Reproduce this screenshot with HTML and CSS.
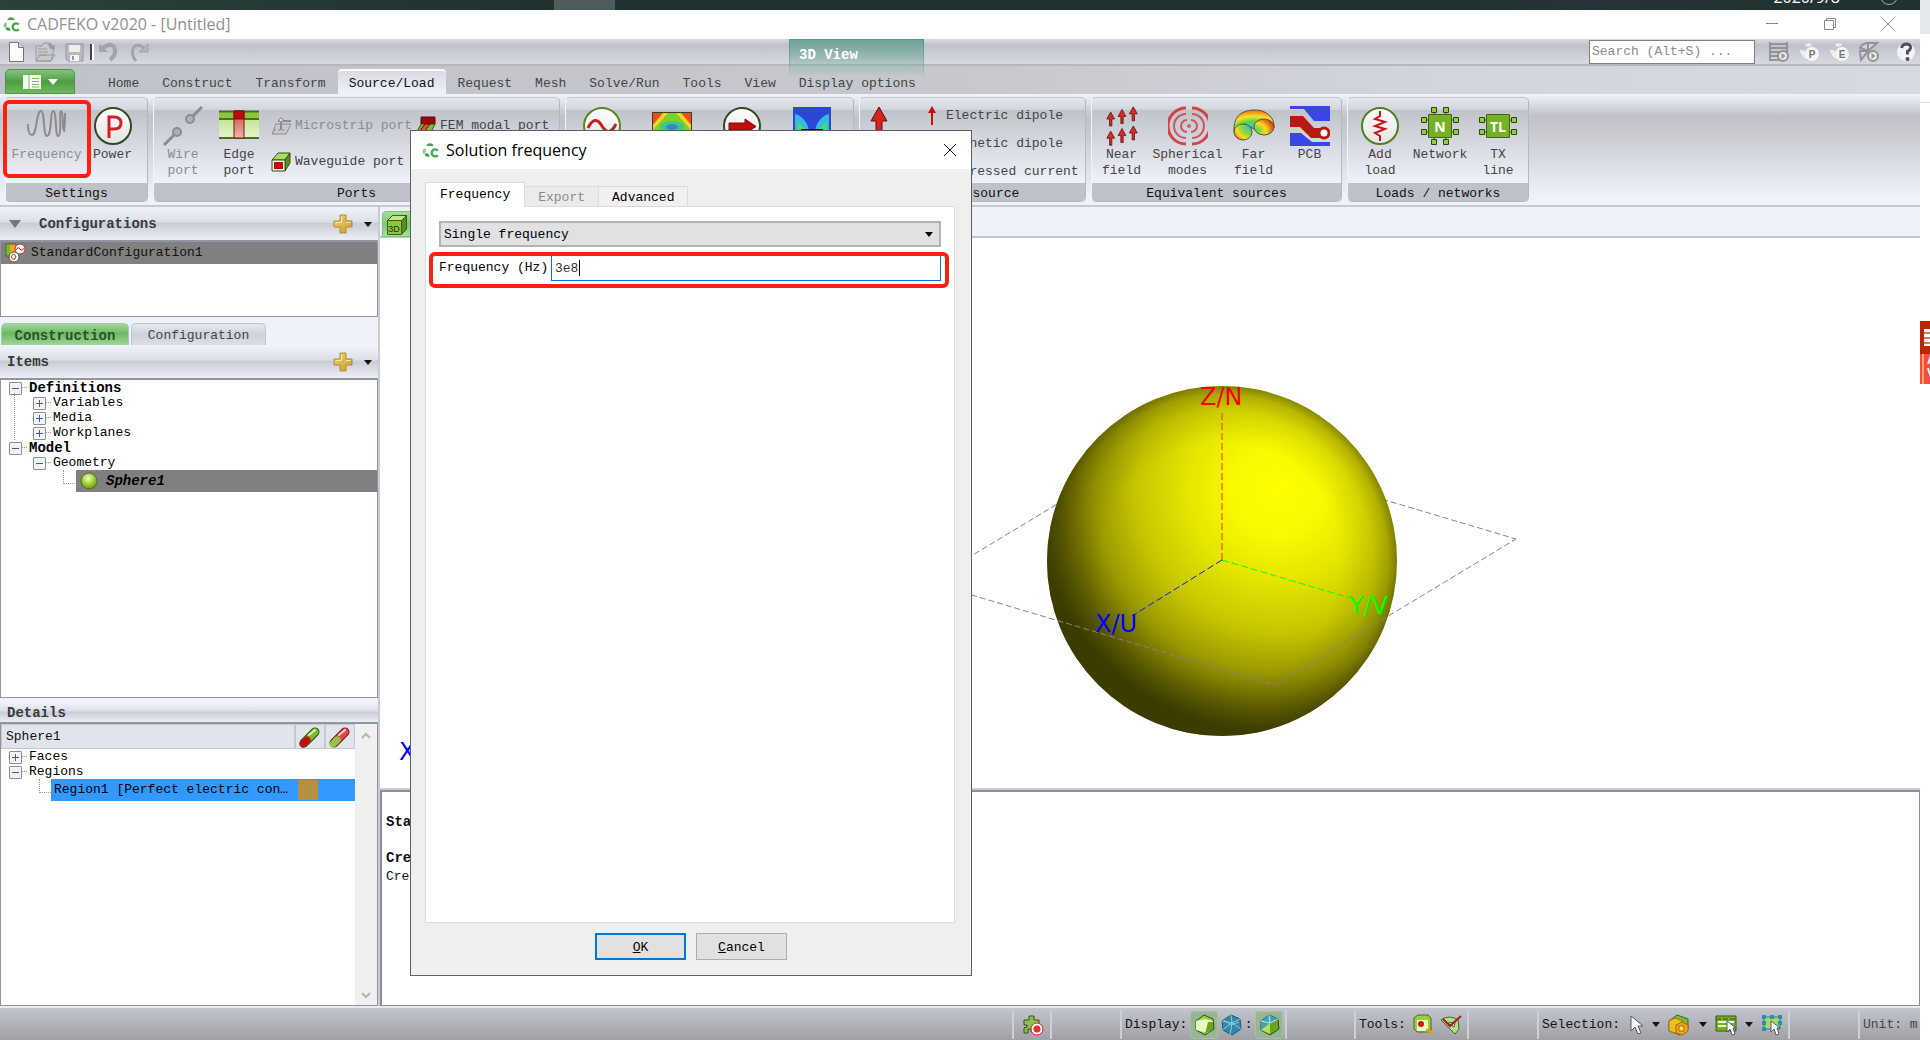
FILE: index.html
```html
<!DOCTYPE html>
<html lang="en">
<head>
<meta charset="utf-8">
<title>CADFEKO v2020 - [Untitled]</title>
<link rel="stylesheet" href="styles.css">
</head>
<body>
<svg class="defs" width="0" height="0" aria-hidden="true">
  <defs>
    <linearGradient id="gold" x1="0" y1="0" x2="1" y2="1"><stop offset="0" stop-color="#ecd577"/><stop offset="1" stop-color="#c9992c"/></linearGradient>
    <radialGradient id="ball" cx=".45" cy=".35" r=".65"><stop offset="0" stop-color="#f2fbd8"/><stop offset=".5" stop-color="#a4d63c"/><stop offset="1" stop-color="#5f9a10"/></radialGradient>
    <linearGradient id="edgeFade" x1="0" y1="0" x2="0" y2="1"><stop offset="0" stop-color="#b5dd7c"/><stop offset="1" stop-color="#e6f5cf"/></linearGradient>
    <linearGradient id="redFade" x1="0" y1="0" x2="0" y2="1"><stop offset="0" stop-color="#d24a43"/><stop offset="1" stop-color="#eeb5a8"/></linearGradient>
    <linearGradient id="disc" x1="0" y1="0" x2="0" y2="1"><stop offset="0" stop-color="#ffffff"/><stop offset="1" stop-color="#e2e2e2"/></linearGradient>
    <radialGradient id="rainbow" cx=".5" cy=".95" r=".95"><stop offset=".2" stop-color="#35c8d8"/><stop offset=".45" stop-color="#5bd13e"/><stop offset=".7" stop-color="#f5e428"/><stop offset="1" stop-color="#ee6a12"/></radialGradient>
    <radialGradient id="lobeL" cx=".9" cy=".15" r="1"><stop offset="0" stop-color="#33bfd2"/><stop offset=".5" stop-color="#8fd833"/><stop offset=".8" stop-color="#f6e01f"/><stop offset="1" stop-color="#ef7a14"/></radialGradient>
    <radialGradient id="lobeR" cx=".1" cy=".75" r="1"><stop offset="0" stop-color="#45cf5f"/><stop offset=".5" stop-color="#f4dc20"/><stop offset="1" stop-color="#dd2413"/></radialGradient>
    <symbol id="logo" viewBox="0 0 18 18">
      <path d="M5 4.500Q9 0 13 4.500L10.500 5.200Q9 4.300 7.500 5.200Z" fill="#43a04d"/>
      <path d="M3 7.500Q0 11 3 13L5 11Q4 9.500 5 8Z" fill="#8cc98f"/>
      <path d="M3.500 13.500Q5 16.500 8.500 15.500L7.500 12.800Q6 13 5.500 12Z" fill="#3f9d49"/>
      <path d="M16.800 9.600A3.500 3.500 0 1 0 16.800 14.200" fill="none" stroke="#46a84f" stroke-width="2.400"/>
    </symbol>
    <symbol id="plus" viewBox="0 0 20 20"><path d="M7 1h6v6h6v6h-6v6H7v-6H1V7h6z" fill="url(#gold)" stroke="#b48b2c"/><path d="M8.500 2.500v6H2.500M13 8.500h4.500" fill="none" stroke="#f7e9a8"/></symbol>
    <symbol id="tri" viewBox="0 0 8 5"><path d="M0 0h8L4 5z" fill="currentColor"/></symbol>
    <symbol id="field-arrow" viewBox="0 0 12 20"><path d="M6 1l5 9H7.500v9h-3v-9H1z" fill="#d92b24" stroke="#5c1110"/></symbol>
  </defs>
</svg>

<div class="desktop">
<main class="app">
  <div class="taskstrip"><span class="strip-thumb"></span><span class="strip-date">2020/9/8</span><span class="strip-dot"></span></div>

  <header class="titlebar">
    <svg class="logo" width="18" height="18"><use href="#logo"/></svg>
    <h1>CADFEKO v2020 - [Untitled]</h1>
    <div class="winbtns">
      <button aria-label="Minimize"><svg width="14" height="14"><path d="M1 6.500h12" stroke="#888" fill="none"/></svg></button>
      <button aria-label="Restore"><svg width="14" height="14"><path d="M1.500 3.500h9v9h-9zM3.500 3.500v-2h9v9h-2" stroke="#888" fill="none"/></svg></button>
      <button aria-label="Close"><svg width="14" height="14"><path d="M1 1l12 12M13 1L1 13" stroke="#888" fill="none"/></svg></button>
    </div>
  </header>

  <div class="quickbar">
    <button aria-label="New"><svg width="20" height="22"><path d="M3.500 1.500h9l5 5v14h-14z" fill="#fcfcfc" stroke="#777"/><path d="M12.500 1.500v5h5" fill="#ddd" stroke="#777"/></svg></button>
    <button aria-label="Open"><svg width="22" height="22"><path d="M2 20V5h6l2-3h6v5h4l-3 13z" fill="#c9cacd" stroke="#9a9a9a"/><path d="M4 8h9M4 11h10M4 14h8M2 20l4-6h15l-4 6z" stroke="#9a9a9a" fill="none"/><path d="M13 4q4-3 6 1l2-1-1 5-5-2 2-1q-2-2-4-2z" fill="#999"/></svg></button>
    <button aria-label="Save"><svg width="22" height="22"><path d="M2 3h17v17H4l-2-2z" fill="#b9babd" stroke="#999"/><path d="M5 4h11v7H5z" fill="#eee"/><path d="M6 14h9v6H6z" fill="#f5f5f5"/><path d="M8 15h2v4H8z" fill="#999"/></svg></button>
    <span class="qdiv"></span>
    <button aria-label="Undo"><svg width="22" height="22"><path d="M5 7Q14 0 17 8Q18 14 12 19" fill="none" stroke="#a3a4a8" stroke-width="4"/><path d="M1 3v8h9z" fill="#a3a4a8"/></svg></button>
    <button aria-label="Redo"><svg width="22" height="22"><path d="M16 7Q8 1 5 8Q3 14 8 20" fill="none" stroke="#a3a4a8" stroke-width="3"/><path d="M20 3v8h-9z" fill="#b4b5b9" stroke="#a3a4a8"/></svg></button>
    <div class="context-head">3D View</div>
    <div class="quick-right">
      <input class="search" type="text" aria-label="Search" placeholder="Search (Alt+S) ...">
      <button aria-label="CADFEKO"><svg width="22" height="22"><path d="M2 1v19M19 1v10M1 3h18M1 7h18M1 11h12M1 15h10M1 19h11" stroke="#929396" stroke-width="2" fill="none"/><circle cx="15" cy="15" r="5" fill="#e8e8e8" stroke="#929396" stroke-width="2"/><path d="M13.500 12l4 3-4 3z" fill="#929396"/></svg></button>
      <button aria-label="POSTFEKO"><svg width="22" height="22"><path d="M6 4q5-5 9 0l-3 2H9zM1 8l6 1 3 10q-7-1-9-11z" fill="#eee" stroke="#c4c4c6"/><circle cx="14" cy="13" r="7" fill="#f6f6f6"/><text x="14" y="17" class="glyph">P</text></svg></button>
      <button aria-label="EDITFEKO"><svg width="22" height="22"><path d="M6 4q5-5 9 0l-3 2H9zM1 8l6 1 3 10q-7-1-9-11z" fill="#eee" stroke="#c4c4c6"/><circle cx="14" cy="13" r="7" fill="#f6f6f6"/><text x="14" y="17" class="glyph">E</text></svg></button>
      <button aria-label="Run solver"><svg width="22" height="22"><path d="M2 7q3-5 8-5v8zM10 10l9-8H10zM10 10H2l1 9zM3 7l7 3" fill="#d6d6d8" stroke="#929396" stroke-width="2"/><circle cx="15" cy="15" r="5" fill="#e8e8e8" stroke="#929396" stroke-width="2"/><path d="M13.500 12l4 3-4 3z" fill="#929396"/></svg></button>
      <button class="help" aria-label="Help"><svg width="22" height="22"><circle cx="11" cy="11" r="9" fill="#f2f3f5"/><path d="M6.500 7Q7.500 3 11.500 3Q16 3.500 15.500 7Q15 9.500 12.500 10.500V13.500" fill="none" stroke="#4c4f5a" stroke-width="3"/><circle cx="12.500" cy="18" r="2" fill="#4c4f5a"/></svg></button>
    </div>
  </div>

  <nav class="tabs">
    <button class="appmenu" aria-label="Application menu"><svg width="18" height="14"><path d="M0 0h18v14H0z" fill="#f3fbef"/><path d="M6 0v14M9 3.500h7M9 6.500h7M9 9.500h7M9 12h7" stroke="#7dbb68" fill="none"/></svg><svg width="10" height="6"><path d="M0 0h10L5 6z" fill="#fff"/></svg></button>
    <a href="#">Home</a><a href="#">Construct</a><a href="#">Transform</a><a href="#" class="on">Source/Load</a><a href="#">Request</a><a href="#">Mesh</a><a href="#">Solve/Run</a><a href="#">Tools</a><a href="#">View</a><a href="#">Display options</a>
  </nav>

  <section class="ribbon">
    <div class="group settings">
      <div class="tools">
        <button class="big off w72"><svg width="40" height="40"><path d="M1 18q0 11 4 11c5 0 4-24 9-24c4 0 2 25 6 25c5 0 3-25 6-25c4 0 2 25 5 25c4 0 1-25 3-25c3 0 1 20 3 20q1-6 1-18" fill="none" stroke="#8b8c90" stroke-width="2"/></svg>Frequency</button>
        <button class="big w60"><svg width="40" height="40"><circle cx="20" cy="20" r="18" fill="url(#disc)" stroke="#2f4a22" stroke-width="2"/><path d="M16 32V11h5q7 0 7 6t-7 6h-5" fill="none" stroke="#cf2127" stroke-width="3"/></svg>Power</button>
        <span class="mark mark-ribbon"></span>
      </div>
      <h2>Settings</h2>
    </div>

    <div class="group ports">
      <div class="tools">
        <button class="big off w56"><svg width="40" height="40"><path d="M1 39L15 25M26 14L39 1" stroke="#8b8c90" stroke-width="3"/><circle cx="14" cy="26" r="4" fill="#b0b1b5" stroke="#8b8c90" stroke-width="2"/><circle cx="27" cy="13" r="4" fill="#b0b1b5" stroke="#8b8c90" stroke-width="2"/></svg>Wire<br>port</button>
        <button class="big w56"><svg width="42" height="40"><path d="M1 5h40v27H1z" fill="url(#edgeFade)"/><path d="M1 5h40v8H1z" fill="#8cc63a"/><path d="M1 5.500h40M1 13h40M1 32h40" stroke="#4a6d20" stroke-width="2"/><path d="M16 5h10v27H16z" fill="url(#redFade)" stroke="#7c120e"/><path d="M16 5h10v8H16z" fill="#bb0b09" stroke="#7c120e"/></svg>Edge<br>port</button>
        <div class="stack two">
          <button class="small off"><svg width="20" height="20"><path d="M5 8h15l-5 10H1z" fill="#c7c8cc" stroke="#8b8c90"/><path d="M7 5h14M10 2v12" stroke="#8b8c90" stroke-width="2"/><circle cx="10" cy="4" r="2" fill="#ddd" stroke="#8b8c90"/><path d="M3 14l12 0" stroke="#8b8c90" stroke-dasharray="2 2"/></svg>Microstrip port</button>
          <button class="small"><svg width="20" height="20"><path d="M1 8l6-7h12l-5 7z" fill="#a9dc60" stroke="#34520f"/><path d="M14 8l5-7v10l-5 8z" fill="#5f9317" stroke="#34520f"/><path d="M1 8h13v11H1z" fill="#f2f9e6" stroke="#34520f"/><path d="M3 10h9v7H3z" fill="#cc0605"/></svg>Waveguide port</button>
        </div>
        <div class="stack two">
          <button class="small"><svg width="20" height="20"><path d="M5 1h14v7H5z" fill="#a00806" stroke="#5e0705"/><path d="M5 8h14l-5 10H0z" fill="#84bd31" stroke="#34520f"/><path d="M3 16l6-8h5l-6 8z" fill="#d4564c" stroke="#5e0705"/></svg>FEM modal port</button>
        </div>
      </div>
      <h2>Ports</h2>
    </div>

    <div class="group sources">
      <div class="tools">
        <button class="big w70" aria-label="Voltage source"><svg width="40" height="40"><circle cx="20" cy="20" r="18" fill="url(#disc)" stroke="#58851d" stroke-width="2"/><path d="M6 22q7-14 14-2t14-2" fill="none" stroke="#c81e1e" stroke-width="3"/></svg></button>
        <button class="big w70" aria-label="Field source"><svg width="40" height="40"><path d="M0 6h40v34H0z" fill="#79cf33"/><path d="M0 6h12L0 20zM40 6H28l12 14z" fill="#ef4d1e"/><path d="M12 6L0 20v5L17 6zM28 6l12 14v5L23 6z" fill="#f3d524"/><ellipse cx="20" cy="21" rx="12" ry="6" fill="#3fc87c"/><ellipse cx="20" cy="21" rx="6" ry="3" fill="#3587cf"/><path d="M.5 40V6.500h39V40" fill="none" stroke="#3d3d25"/></svg></button>
        <button class="big w70" aria-label="Current source"><svg width="40" height="40"><circle cx="20" cy="20" r="18" fill="url(#disc)" stroke="#2f4a22" stroke-width="2"/><path d="M7 17h16v-4l11 7.500L23 28v-4H7z" fill="#c20d0a" stroke="#7b0c0a"/></svg></button>
        <button class="big w70" aria-label="Waveguide field"><svg width="40" height="40"><path d="M1 1h38v39H1z" fill="#2c46d8"/><path d="M3 8q14 3 16 28l-16-5zM37 8Q23 11 21 36l16-5z" fill="#38b7e6"/><path d="M5 16q10 4 12 22H5zM35 16Q25 20 23 38h12z" fill="#45d977"/><path d="M9 23h22v3H9z" fill="#f4ef2b"/><path d="M9 24h22" stroke="#111" stroke-width="2"/></svg></button>
      </div>
      <h2></h2>
    </div>

    <div class="group ideal">
      <div class="tools">
        <button class="big w36" aria-label="Plane wave"><svg width="36" height="40"><path d="M18 1l8 14h-5v25h-6V15h-5z" fill="#d7231d" stroke="#5c1110"/><path d="M32 24l4 3-4 4z" fill="#8a1815"/></svg></button>
        <div class="stack three">
          <button class="small"><svg width="20" height="20"><path d="M10 0l4 7h-3v12H9V7H6z" fill="#c4100e"/></svg>Electric dipole</button>
          <button class="small"><svg width="20" height="20"><path d="M10 0l4 7h-3v12H9V7H6z" fill="#3a9a2a"/></svg>Magnetic dipole</button>
          <button class="small"><svg width="20" height="20"><path d="M10 0l4 7h-3v12H9V7H6z" fill="#c4100e"/></svg>Impressed current</button>
        </div>
      </div>
      <h2>Ideal source</h2>
    </div>

    <div class="group equiv">
      <div class="tools">
        <button class="big w60"><svg width="40" height="46" viewBox="0 0 40 46"><use href="#field-arrow" x="1" y="6" width="12" height="18"/><use href="#field-arrow" x="14" y="3" width="12" height="18"/><use href="#field-arrow" x="27" y="0" width="12" height="18"/><use href="#field-arrow" x="1" y="28" width="12" height="18"/><use href="#field-arrow" x="14" y="25" width="12" height="18"/><use href="#field-arrow" x="27" y="22" width="12" height="18"/></svg>Near<br>field</button>
        <button class="big w72"><svg width="40" height="40"><g fill="none" stroke="#d02323" stroke-width="2"><path d="M18 2a18 18 0 0 0 0 36M24 38a18 18 0 0 0 0-36" stroke-width="3" opacity=".8"/><path d="M18 8a12 12 0 0 0 0 24M24 32a12 12 0 0 0 0-24" opacity=".7"/><path d="M19 14a6 6 0 0 0 0 12M23 26a6 6 0 0 0 0-12" opacity=".7"/></g><circle cx="21" cy="20" r="2" fill="#d86060"/></svg>Spherical<br>modes</button>
        <button class="big w60"><svg width="42" height="40"><path d="M1 26C0 9 10 4 22 4S42 12 41 22L31 14 21 23 12 18z" fill="url(#rainbow)" stroke="#575540"/><ellipse cx="10" cy="26" rx="9" ry="8" fill="url(#lobeL)" stroke="#575540"/><ellipse cx="31" cy="21" rx="10" ry="8" fill="url(#lobeR)" stroke="#575540"/></svg>Far<br>field</button>
        <button class="big w52"><svg width="40" height="40"><path d="M0 0h40v15H24L14 3H0zM0 27h11l11 9h18v4H0z" fill="#3846e6"/><path d="M0 10h13l11 12h12a6 6 0 0 1 0 10H21L10 21H0z" fill="#b51b12"/><circle cx="34" cy="27" r="5" fill="#fff" stroke="#b51b12" stroke-width="3"/></svg>PCB</button>
      </div>
      <h2>Equivalent sources</h2>
    </div>

    <div class="group loads">
      <div class="tools">
        <button class="big w60"><svg width="40" height="40"><circle cx="20" cy="20" r="18" fill="url(#disc)" stroke="#4f7d22" stroke-width="2"/><path d="M20 5v5l-5 3 10 3-10 4 10 3-10 4 5 3v5" fill="none" stroke="#c81412" stroke-width="2"/></svg>Add<br>load</button>
        <button class="big w60"><svg width="40" height="40"><path d="M4 14h32M4 26h32M14 4v32M26 4v32" stroke="#30451c"/><path d="M8.500 8.500h23v23h-23z" fill="#74b224" stroke="#3c6412"/><path d="M1.500 11.500h5v5h-5zM1.500 23.500h5v5h-5zM33.500 11.500h5v5h-5zM33.500 23.500h5v5h-5zM11.500 1.500h5v5h-5zM23.500 1.500h5v5h-5zM11.500 33.500h5v5h-5zM23.500 33.500h5v5h-5z" fill="#8fd03a" stroke="#2c4314"/><text x="20" y="26" class="chip">N</text></svg>Network</button>
        <button class="big w56"><svg width="40" height="40"><path d="M4 14h32M4 26h32" stroke="#30451c"/><path d="M8.500 8.500h23v23h-23z" fill="#74b224" stroke="#3c6412"/><path d="M1.500 11.500h5v5h-5zM1.500 23.500h5v5h-5zM33.500 11.500h5v5h-5zM33.500 23.500h5v5h-5z" fill="#8fd03a" stroke="#2c4314"/><text x="20" y="26" class="chip">TL</text></svg>TX<br>line</button>
      </div>
      <h2>Loads / networks</h2>
    </div>
  </section>

  <div class="workspace">
    <aside class="side">
      <div class="phead tall"><svg class="fold" width="12" height="8"><path d="M0 0h12L6 8z" fill="#777"/></svg><h3>Configurations</h3><button aria-label="Add configuration"><svg width="20" height="20"><use href="#plus"/></svg></button><button aria-label="Configuration options"><svg width="8" height="5"><use href="#tri"/></svg></button></div>
      <div class="box configs">
        <div class="config-row"><svg width="22" height="20"><path d="M1 1h10v12H1z" fill="#f6a21c" stroke="#3d6b1e"/><path d="M2 2h3v10H2z" fill="#5cc52f"/><circle cx="15" cy="6" r="5" fill="#fff" stroke="#a33"/><path d="M11 7q2-4 4-1t4-1" fill="none" stroke="#d11a1a"/><circle cx="9" cy="14" r="5" fill="#fff" stroke="#3d6b1e"/><path d="M6 14q3-6 5 0-2 5-5 0z" fill="none" stroke="#d11a1a"/></svg>StandardConfiguration1</div>
      </div>
      <div class="ptabs"><button class="on">Construction</button><button>Configuration</button></div>
      <div class="phead tall"><h3>Items</h3><button aria-label="Add item"><svg width="20" height="20"><use href="#plus"/></svg></button><button aria-label="Item options"><svg width="8" height="5"><use href="#tri"/></svg></button></div>
      <div class="box items">
        <ul class="tree">
          <li class="open"><span class="node strong">Definitions</span>
            <ul><li class="shut"><span class="node">Variables</span></li><li class="shut"><span class="node">Media</span></li><li class="shut"><span class="node">Workplanes</span></li></ul>
          </li>
          <li class="open"><span class="node strong">Model</span>
            <ul><li class="open"><span class="node">Geometry</span>
              <ul class="leafs"><li><span class="leaf sphere"><svg width="18" height="18"><circle cx="9" cy="9" r="8" fill="url(#ball)" stroke="#50741c"/></svg>Sphere1</span></li></ul>
            </li></ul>
          </li>
        </ul>
      </div>
      <div class="phead short"><h3>Details</h3></div>
      <div class="box details">
        <div class="detail-main">
          <div class="detail-head"><span>Sphere1</span>
            <button aria-label="Show faces"><svg width="22" height="22"><path d="M5 17L16 6" stroke="#2f4d12" stroke-width="9" stroke-linecap="round"/><path d="M6 16L16 6" stroke="#7dbb2c" stroke-width="7" stroke-linecap="round"/><path d="M10 9l6-5" stroke="#d8f0a8" stroke-width="2" stroke-linecap="round"/><path d="M4 18l4-4" stroke="#c00f12" stroke-width="7" stroke-linecap="round"/></svg></button>
            <button aria-label="Show regions"><svg width="22" height="22"><path d="M5 17L16 6" stroke="#7a1414" stroke-width="9" stroke-linecap="round"/><path d="M6 16L16 6" stroke="#e04a4a" stroke-width="7" stroke-linecap="round"/><path d="M10 9l6-5" stroke="#ffd0d0" stroke-width="2" stroke-linecap="round"/><path d="M4 18l4-4" stroke="#8cc84a" stroke-width="7" stroke-linecap="round"/></svg></button>
          </div>
          <ul class="tree">
            <li class="shut"><span class="node">Faces</span></li>
            <li class="open"><span class="node">Regions</span>
              <ul class="leafs"><li><span class="leaf region">Region1 [Perfect electric con…<i class="swatch"></i></span></li></ul>
            </li>
          </ul>
        </div>
        <div class="scroll"><svg width="10" height="7"><path d="M1 6l4-4 4 4" fill="none" stroke="#b5b5b5" stroke-width="2"/></svg><svg width="10" height="7"><path d="M1 1l4 4 4-4" fill="none" stroke="#b5b5b5" stroke-width="2"/></svg></div>
      </div>
    </aside>

    <section class="stage">
      <div class="viewtabs"><button aria-label="3D view"><svg width="22" height="22"><path d="M1.500 6.500l5-5h14v14l-5 5h-14z" fill="#8cc63f" stroke="#3e5f14"/><path d="M1.500 6.500l5-5h14l-5 5z" fill="#c4e58c" stroke="#3e5f14"/><path d="M15.500 6.500l5-5v14l-5 5z" fill="#5c8c1a" stroke="#3e5f14"/><text x="8" y="18" class="cube">3D</text></svg></button></div>
      <div class="viewport">
        <svg viewBox="380 238 1540 550" role="img" aria-label="Sphere model">
          <defs>
            <radialGradient id="lit" gradientUnits="userSpaceOnUse" cx="1278" cy="490" r="244"><stop offset="0" stop-color="#ffff00"/><stop offset=".2" stop-color="#f8f800"/><stop offset=".38" stop-color="#e4e400"/><stop offset=".58" stop-color="#c6c600"/><stop offset=".75" stop-color="#9a9a00"/><stop offset=".9" stop-color="#5e5e00"/><stop offset="1" stop-color="#3c3c00"/></radialGradient>
            <radialGradient id="rim" gradientUnits="userSpaceOnUse" cx="1222" cy="561" r="175"><stop offset=".68" stop-color="#3c3c00" stop-opacity="0"/><stop offset=".86" stop-color="#3c3c00" stop-opacity=".13"/><stop offset=".95" stop-color="#3c3c00" stop-opacity=".3"/><stop offset="1" stop-color="#3c3c00" stop-opacity=".55"/></radialGradient>
          </defs>
          <path d="M928 582L1170 436L1516 539" class="plane"/>
          <circle cx="1222" cy="561" r="175" fill="url(#lit)"/>
          <circle cx="1222" cy="561" r="175" fill="url(#rim)"/>
          <path d="M928 582L1274 685L1516 539" class="plane"/>
          <path d="M1222 560V413" class="axis z"/>
          <path d="M1222 560L1132 616" class="axis x"/>
          <path d="M1222 560L1350 598" class="axis y"/>
          <text x="1200" y="405" class="zt">Z/N</text>
          <text x="1095" y="632" class="xt">X/U</text>
          <text x="1349" y="614" class="yt">Y/V</text>
          <text x="399" y="760" class="xt">X</text>
        </svg>
      </div>
      <div class="messages"><p><b>Started</b></p><p class="gap"><b>Created</b></p><p>Created</p></div>
    </section>
  </div>

  <footer class="status">
    <div class="cell c38"><svg width="22" height="22"><path d="M2 6h5V2h5v4h5v5l3 1v6H9v-3H6v4H2v-5l3-1v-2H2z" fill="#8fc14a" stroke="#33501a"/><circle cx="15" cy="15" r="6" fill="#fff" stroke="#d22"/><circle cx="15" cy="15" r="3.500" fill="#e03030"/></svg></div>
    <div class="cell c70"></div>
    <div class="cell c165"><span>Display:</span>
      <button class="pressed" aria-label="Show geometry"><svg width="22" height="22"><path d="M3 7l8-6 9 4 1 10-9 6-9-5z" fill="#9ccf3e" stroke="#2f4d12"/><path d="M3 7l9-2 8 2-5 12-12-3z" fill="#e9f7c0"/><path d="M15 8l5 0 0 7-8 5z" fill="#6ca51d"/></svg></button>
      <button aria-label="Show mesh"><svg width="22" height="22"><path d="M2 7l9-6 9 4 1 10-9 6-9-5z" fill="#3189a8" stroke="#185a73"/><path d="M2 7l10 2 8-4M12 9l-2 12M12 9l9 6M2 16l10-7-1-8M4 6l7 5 8-3" stroke="#8fc9dc" fill="none"/></svg></button><span>:</span>
      <button class="pressed" aria-label="Show both"><svg width="22" height="22"><path d="M3 7l8-6 9 4 1 10-9 6-9-5z" fill="#6ca51d" stroke="#2f4d12"/><path d="M3 7l8-6 9 4-8 4-9 7z" fill="#3f9fbe"/><path d="M12 9l-9 7 9 4z" fill="#b4dd5e"/><path d="M3 7l9 2 8-4M11 1l1 8" stroke="#bfe6f2" fill="none"/></svg></button>
    </div>
    <div class="cell c69"></div>
    <div class="cell c113"><span>Tools:</span>
      <button aria-label="Measure"><svg width="22" height="22"><path d="M2 4l4-3h10l3 3v12l-3 2H5l-3-3z" fill="#9ccf3e" stroke="#46651f"/><path d="M5 6h11v11H5z" fill="#e9f7c0"/><circle cx="9" cy="10" r="3" fill="#c81a10"/><path d="M14 16l7 3" stroke="#d89c1e" stroke-width="3"/></svg></button>
      <button aria-label="Angle"><svg width="22" height="22"><path d="M1 6q8-6 17 0l1 9-4 5z" fill="#b9de86" stroke="#46651f"/><path d="M8 9l6 4 1-5z" fill="#eef8dd" stroke="#46651f"/><path d="M3 5l7 7L21 2" fill="none" stroke="#a32020" stroke-width="2"/></svg></button>
    </div>
    <div class="cell c70"></div>
    <div class="cell c251"><span>Selection:</span>
      <button aria-label="Pointer"><svg width="16" height="22"><path d="M3 2v15l4-4 3 7 3-1-3-7h5z" fill="#fff" stroke="#556"/></svg></button><svg class="tri" width="8" height="5"><use href="#tri"/></svg>
      <button aria-label="Select part"><svg width="22" height="22"><path d="M1 7l8-6 11 4v10l-8 6-11-4z" fill="#7dbb2c" stroke="#41631a"/><path d="M1 7l6-3 8 3-5 4v9l-9-3z" fill="#e8c21c" stroke="#a37a0c"/><path d="M8 11l6-3 6 3v6l-6 4-6-2z" fill="#f0a81c" stroke="#a3640c"/><path d="M11 12h5v5h-5z" fill="#f9e070" stroke="#a3640c"/></svg></button><svg class="tri" width="8" height="5"><use href="#tri"/></svg>
      <button aria-label="Select by list"><svg width="22" height="22"><path d="M1 2h20v15H1z" fill="#74b224" stroke="#35551a"/><path d="M3 8h16M3 12h10" stroke="#ecf7d8" stroke-width="2"/><path d="M1 5h20" stroke="#35551a" stroke-dasharray="5 2"/><path d="M12 7v11l3-3 2 6 3-1-2-6h3z" fill="#fff" stroke="#556"/></svg></button><svg class="tri" width="8" height="5"><use href="#tri"/></svg>
      <button aria-label="Box select"><svg width="22" height="22"><path d="M3 3h16v12H3z" fill="#a8d46a" stroke="#2b7d94"/><path d="M1 1h4v4H1zM9 1h4v4H9zM17 1h4v4h-4zM1 7h4v4H1zM1 13h4v4H1zM17 7h4v4h-4z" fill="#2c8fab"/><path d="M10 7v11l3-3 2 6 3-1-2-6h3z" fill="#fff" stroke="#556"/></svg></button>
    </div>
    <div class="cell c70"></div>
    <div class="cell c62 dim"><span>Unit: m</span></div>
  </footer>

  <div class="dialog" role="dialog" aria-labelledby="dlg">
    <div class="dtitle"><svg width="18" height="18"><use href="#logo"/></svg><h2 id="dlg">Solution frequency</h2><button aria-label="Close dialog"><svg width="14" height="14"><path d="M1 1l12 12M13 1L1 13" stroke="#111" fill="none"/></svg></button></div>
    <div class="dtabs"><button class="on">Frequency</button><button disabled>Export</button><button>Advanced</button></div>
    <div class="dpane">
      <div class="combo"><select aria-label="Frequency type"><option>Single frequency</option></select><svg width="8" height="5"><use href="#tri"/></svg></div>
      <div class="field"><label for="freq">Frequency (Hz)</label><div class="entry"><input id="freq" type="text" value="3e8"><i class="caret"></i></div><span class="mark mark-field"></span></div>
    </div>
    <div class="dbtns"><button class="primary"><u>O</u>K</button><button><u>C</u>ancel</button></div>
  </div>
</main>
<aside class="edge"><span class="edge-top"></span><span class="edge-line"></span><span class="edge-red"></span><span class="edge-tag">A<br>V</span></aside>
</div>
</body>
</html>
```
FILE: styles.css
```css
* { box-sizing: border-box; }
body { margin: 0; background: #fff; color: #111; font: 13px/16px "Liberation Mono", monospace; }
button { margin: 0; padding: 0; border: 0; background: none; color: inherit; font: inherit; }
button svg, .logo { display: block; flex: none; }
h1, h2, h3, p, ul { margin: 0; padding: 0; font-weight: normal; }
a { color: inherit; text-decoration: none; }
.defs { position: absolute; }
.desktop { display: flex; height: 100vh; min-height: 700px; overflow: hidden; }
.app { position: relative; flex: 1; min-width: 0; display: flex; flex-direction: column; background: #eff2fb; }

/* strip of the desktop above the window */
.taskstrip { position: relative; flex: none; height: 10px; overflow: hidden; background: linear-gradient(90deg, #2b413e, #1f3130 30%, #1f3130 75%, #263538 82%, #1f3130); }
.strip-thumb { position: absolute; left: 554px; top: 0; width: 61px; height: 10px; background: #4e5c5c; }
.strip-date { position: absolute; right: 80px; bottom: 5px; color: #fff; font: 16px/16px "Open Sans", sans-serif; }
.strip-dot { position: absolute; right: 22px; bottom: 5px; width: 18px; height: 18px; border: 1px solid #aaa; border-radius: 9px; }

.titlebar { flex: none; height: 29px; padding: 0 20px 1px 2px; display: flex; align-items: center; gap: 7px; background: #fff; }
.titlebar h1 { flex: 1; color: #8f8f8f; font: 16px/20px "Open Sans", sans-serif; }
.winbtns { display: flex; gap: 44px; padding-right: 5px; }

.quickbar { position: relative; flex: none; height: 27px; padding: 0 3px 0 6px; display: flex; align-items: center; gap: 8px; background: linear-gradient(#d6d9e1, #bfc2ca 25%, #d4d7df 90%); border-bottom: 2px solid #b5b7bd; }
.qdiv { width: 4px; height: 16px; margin: 0 -4px; border-left: 2px solid #444; background: #fff; }
.context-head { position: absolute; left: 789px; top: 0; width: 135px; height: 38px; padding: 7px 9px; color: #fff; font-size: 14px; font-weight: bold; background: linear-gradient(#6fa497, #c2c5ca00); border: solid #4d9c85; border-width: 1px 1px 0; border-image: linear-gradient(#4d9c85, #4d9c8500) 1; }
.quick-right { flex: 1; display: flex; justify-content: flex-end; align-items: center; gap: 8px; }
.search { width: 166px; height: 24px; margin-right: 5px; padding: 0 2px; border: 1px solid #808080; background: #fff; color: #888; font: inherit; }
.search::placeholder { color: #8c8c8c; opacity: 1; }
.help { margin-left: 7px; }
.glyph { font: bold 10px "Liberation Sans", sans-serif; fill: #777; text-anchor: middle; }
.chip { font: bold 14px "Open Sans", sans-serif; fill: #fff; text-anchor: middle; }
.cube { font: 9px "Liberation Sans", sans-serif; fill: #1e3208; text-anchor: middle; }

.tabs { flex: none; height: 28px; display: flex; align-items: flex-end; padding-left: 5px; background: linear-gradient(90deg, #bfc2c8, #c6c8ce 50%, #d3d5dc 75%, #d6d9e2); }
.tabs a { height: 25px; padding: 7px 12px 0 11px; color: #444; white-space: nowrap; }
.tabs a.on { color: #111; background: linear-gradient(#d8dbe3, #eff2fb); border-top: 2px solid #fafbff; border-radius: 4px 4px 0 0; padding-top: 5px; }
.appmenu { width: 70px; height: 25px; margin-right: 22px; display: flex; align-items: center; justify-content: center; gap: 7px; border: 1px solid #4c9440; border-radius: 5px 5px 0 0; background: linear-gradient(#85c47d, #4f9d43 50%, #6fb85f); }

.ribbon { flex: none; height: 113px; padding: 3px 5px 3px; display: flex; gap: 5px; background: linear-gradient(#f1f4fd, #c0c2c9 20%, #c8cad0 35%, #eff2fb 92%); border-bottom: 2px solid #c6c9d2; }
.group { display: flex; flex-direction: column; border: 1px solid #b6b8bf; border-top-color: #c6c8cf; border-left-color: #f2f4fa; border-radius: 5px; overflow: hidden; background: linear-gradient(#e4e7ef, #d3d6dd 11%, #c0c3ca 12%, #eff2fb 82%); }
.group h2 { height: 18px; color: #111; text-align: center; font-size: 13px; line-height: 21px; background: #bfc2c9; }
.settings { width: 143px; overflow: visible; }
.ports { width: 407px; }
.sources { width: 289px; }
.ideal { width: 227px; }
.equiv { width: 251px; }
.loads { width: 182px; }
.tools { position: relative; flex: 1; min-height: 0; padding: 8px 4px 0; display: flex; justify-content: center; color: #444; }
.ports .tools, .ideal .tools { justify-content: flex-start; padding-left: 1px; }
.sources .tools, .equiv .tools { padding-right: 10px; }
.big { display: flex; flex-direction: column; align-items: center; white-space: nowrap; flex: none; }
.big svg { height: 40px; margin-bottom: 1px; }
.off { color: #8b8c90; }
.w36 { width: 36px; } .w52 { width: 52px; } .w56 { width: 56px; } .w60 { width: 60px; } .w70 { width: 70px; } .w72 { width: 72px; }
.stack { display: flex; flex-direction: column; margin-left: 4px; }
.two { gap: 16px; padding-top: 10px; }
.ideal .three { gap: 8px; margin-left: 25px; }
.small { display: flex; align-items: center; gap: 4px; height: 20px; white-space: nowrap; }
.mark { position: absolute; border: 4px solid #fb2110; border-radius: 6px; pointer-events: none; }
.mark-ribbon { left: -3px; top: 2px; width: 88px; height: 78px; }

.workspace { flex: 1; min-height: 0; display: flex; gap: 2px; background: #c9ccd4; }
.side { width: 378px; flex: none; display: flex; flex-direction: column; background: #eff2fb; }
.phead { flex: none; display: flex; align-items: center; gap: 9px; padding: 1px 6px 0 7px; background: linear-gradient(#f1f4fc, #dcdfe6 45%, #c9ccd4 50%, #eceff7); }
.phead.tall { height: 33px; }
.phead.tall button:last-child { margin-left: 2px; }
.phead.short { height: 20px; }
.phead h3 { flex: 1; color: #3a3a3a; font-size: 14px; font-weight: bold; }
.fold { margin: 0 9px 0 2px; }
.box { border: 1px solid #9095a0; background: #fff; border-top-width: 2px; }
.configs { flex: none; height: 77px; margin-bottom: 6px; }
.config-row { height: 22px; padding: 0 4px; display: flex; align-items: center; gap: 4px; background: #808080; }
.ptabs { flex: none; height: 22px; display: flex; gap: 2px; padding-left: 1px; }
.ptabs button { width: 135px; padding-top: 2px; border: 1px solid #c0c3cb; border-bottom: 0; border-radius: 5px 5px 0 0; color: #444; background: linear-gradient(#e6e9f1, #cfd2d9 50%, #dcdfe7); }
.ptabs .on { width: 128px; border-color: #9fd29a; color: #2f4f2f; font-size: 14px; font-weight: bold; background: linear-gradient(#a5d79f, #69bb60 45%, #a0d598); }
.items { flex: 1; min-height: 0; margin-bottom: 4px; }

/* trees */
.tree, .tree ul { list-style: none; }
.tree { padding: 0 0 0 28px; color: #000; }
.tree ul { padding-left: 24px; }
.tree li { position: relative; }
.node { display: block; height: 15px; line-height: 16px; }
.strong { font-size: 14px; font-weight: bold; }
.open::before, .shut::before { content: ""; position: absolute; left: -20px; top: 2px; width: 11px; height: 11px; border: 1px solid #8e8e8e; border-radius: 1px; background: linear-gradient(#3f5ba8, #3f5ba8) center / 7px 1px no-repeat, #f4f4f4; }
.shut::before { background: linear-gradient(#3f5ba8, #3f5ba8) center / 7px 1px no-repeat, linear-gradient(#3f5ba8, #3f5ba8) center / 1px 7px no-repeat, #f4f4f4; }
.open::after, .shut::after { content: ""; position: absolute; left: -8px; top: 7px; width: 6px; border-top: 1px dotted #999; }
.items .tree > li:first-child > ul::before { content: ""; position: absolute; left: -15px; top: 13px; bottom: 0; border-left: 1px dotted #999; }
.leafs::before { content: ""; position: absolute; left: 10px; top: 15px; width: 11px; height: 13px; border: dotted #999; border-width: 0 0 1px 1px; }
.leaf { display: flex; align-items: center; height: 22px; color: #000; }
.sphere { margin-left: -1px; padding-left: 4px; gap: 8px; background: #808080; font-size: 14px; font-weight: bold; font-style: italic; }
.region { margin-left: -2px; padding-left: 3px; gap: 10px; background: #3399ff; }
.swatch { width: 20px; height: 20px; background: #b39042; }

.details { flex: none; height: 284px; display: flex; }
.detail-main { flex: 1; min-width: 0; }
.detail-head { height: 25px; display: flex; align-items: stretch; border: 1px solid #c5c8d0; background: #e2e4ec; }
.detail-head span { flex: 1; padding: 4px; color: #111; }
.detail-head button { width: 30px; display: grid; place-items: center; border-left: 2px solid #c5c8d0; }
.scroll { width: 22px; padding: 8px 0 6px; display: flex; flex-direction: column; justify-content: space-between; align-items: center; background: #f0f0f0; }

.stage { flex: 1; min-width: 0; display: flex; flex-direction: column; }
.viewtabs { flex: none; height: 31px; padding: 4px 2px 0; background: #eff2fb; border-bottom: 2px solid #c3c6ce; }
.viewtabs button { width: 34px; height: 26px; padding: 2px 3px; border: 1px solid #77c76f; border-radius: 4px 4px 0 0; background: linear-gradient(#a5dba0, #7cc875 50%, #a9dba4); }
.viewport { flex: 1; min-height: 0; background: #fff; }
.viewport svg { display: block; width: 100%; height: 100%; }
.plane { fill: none; stroke: #858585; stroke-dasharray: 6 3; }
.axis { fill: none; stroke-dasharray: 7 3; }
.viewport text { font: 24px "DejaVu Sans", sans-serif; }
.x { stroke: #1414e6; } .y { stroke: #00ff00; } .z { stroke: #ff2a00; }
.xt { fill: #0000ff; } .yt { fill: #00ff00; } .zt { fill: #ff0000; }
.messages { flex: none; height: 216px; margin-top: 2px; padding: 21px 4px; border: 2px solid #8b8e94; border-right-width: 1px; border-bottom-width: 1px; background: #fff; line-height: 18px; }
.messages b { font-size: 14px; }
.messages .gap { margin-top: 17px; }

.status { flex: none; height: 34px; padding-top: 2px; display: flex; justify-content: flex-end; border-top: 2px solid #e9ebf0; background: linear-gradient(#c3c5cd, #a0a1a7); }
.cell { display: flex; align-items: center; justify-content: space-between; height: 29px; padding: 0 5px 0 3px; border-left: 2px solid #cfd0d6; white-space: nowrap; }
.c38 { width: 38px; padding-left: 8px; } .c62 { width: 62px; } .c69 { width: 69px; } .c70 { width: 70px; } .c113 { width: 113px; } .c165 { width: 165px; } .c251 { width: 251px; }
.c165 { padding-right: 2px; }
.pressed { padding: 2px; border: 1px solid #b5bc9c; border-radius: 3px; background: #94b896; }
.dim { color: #444; padding-right: 0; }

/* solution frequency window */
.dialog { position: absolute; left: 410px; top: 130px; width: 562px; height: 846px; display: flex; flex-direction: column; border: 1px solid #5f5f5f; background: #efefef; color: #000; }
.dtitle { flex: none; height: 38px; padding: 0 14px 1px 10px; display: flex; align-items: center; gap: 7px; background: #fff; }
.dtitle h2 { flex: 1; font: 16px/20px "Open Sans", sans-serif; }
.dtabs { flex: none; height: 38px; margin: 0 14px -1px; display: flex; align-items: flex-end; z-index: 1; }
.dtabs button { height: 21px; padding: 2px 13px 0; border: 1px solid #dcdcdc; border-left-width: 0; background: #f0f0f0; }
.dtabs button:disabled { color: #8a8a8a; background: #ebebeb; }
.dtabs .on { height: 25px; padding: 0 14px; border-left-width: 1px; border-bottom: 0; background: #fff; }
.dpane { flex: 1; margin: 0 16px 0 14px; padding: 14px 13px; border: 1px solid #dcdcdc; background: #fff; }
.combo { position: relative; color: #000; }
.combo select { appearance: none; display: block; width: 100%; height: 26px; padding: 1px 3px 0; border: 2px solid #b4b4b4; border-radius: 0; background: #e1e1e1; color: #000; font: inherit; }
.combo svg { position: absolute; right: 8px; top: 11px; }
.field { position: relative; display: flex; align-items: center; margin-top: 8px; white-space: nowrap; }
.field label { width: 112px; }
.entry { position: relative; flex: 1; }
.entry input { display: block; width: 100%; height: 26px; padding: 1px 3px 0; border: 1px solid #0078d7; border-radius: 0; background: #fff; color: #333; font: inherit; outline: 0; }
.caret { position: absolute; left: 28px; top: 5px; width: 1px; height: 16px; background: #000; }
.mark-field { left: -10px; right: -8px; top: -3px; height: 36px; }
.dbtns { flex: none; height: 52px; padding: 10px 0 0 184px; display: flex; gap: 10px; align-items: flex-start; }
.dbtns button { width: 91px; height: 27px; padding-top: 2px; border: 1px solid #adadad; background: #e1e1e1; }
.dbtns .primary { border: 2px solid #0078d7; }

/* what shows right of the window */
.edge { flex: none; width: 10px; display: flex; flex-direction: column; background: #fff; overflow: hidden; }
.edge-top { height: 34px; background: #e5e9ed; }
.edge-line { height: 69px; border-bottom: 1px solid #ddd; }
.edge-red { height: 33px; margin-top: 218px; border: solid #bb2602; border-width: 8px 0 8px 4px; background: repeating-linear-gradient(#fff 0 3px, #d8785c 3px 5px); }
.edge-tag { height: 30px; padding-left: 7px; color: #fff; font: bold 12px/13px "Liberation Sans", sans-serif; background: linear-gradient(90deg, transparent 2px, #e8b04a 2px 4px, transparent 4px) #f8484a; }
```
